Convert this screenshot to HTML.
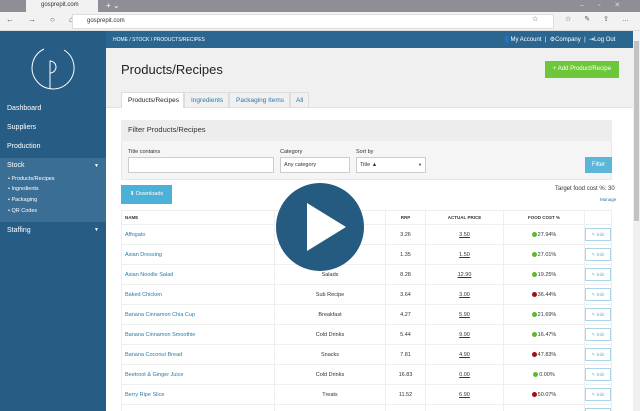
<!DOCTYPE html>
<html><head><style>
*{margin:0;padding:0;box-sizing:border-box}
html{width:640px;height:411px;overflow:hidden}
body{width:640px;height:411px;overflow:hidden;font-family:"Liberation Sans",sans-serif;background:#fff;position:relative;font-size:7px;color:#333}
.abs{position:absolute}
#tabbar{left:0;top:0;width:640px;height:12px;background:#8f8d96}
#tab{left:26px;top:0;width:72px;height:12px;background:#f2f2f2;font-size:6px;padding:2px 0 0 15px;color:#333}
#addr{left:0;top:12px;width:640px;height:19px;background:#f2f2f2;border-bottom:1px solid #ddd}
#url{left:72px;top:14px;width:482px;height:15px;background:#fff;border:1px solid #ddd;font-size:6px;padding:3px 0 0 14px;color:#333}
#side{left:0;top:31px;width:106px;height:380px;background:#275d85}
.nav{position:absolute;left:7px;color:#fff;font-size:7px}
.sub{position:absolute;left:8px;color:#fff;font-size:5.5px}
#top{left:106px;top:31px;width:527px;height:17px;background:#2b6690;color:#fff;font-size:5px}
#scroll{left:633px;top:31px;width:7px;height:380px;background:#f0f0f0}
#hdr{left:106px;top:48px;width:527px;height:60px;background:#f0f0f0;border-bottom:1px solid #e2e2e2}
.tab{position:absolute;top:92px;height:16px;font-size:6.5px;padding-top:4px;color:#2a7aa8;border:1px solid #ddd;border-bottom:none}
#tw{position:absolute;left:0;top:0;width:633px;height:411px;overflow:hidden}
table{position:absolute;left:121px;top:210px;width:491px;border-collapse:collapse;font-size:5.5px}
td,th{border:1px solid #eee;height:20px;text-align:center}
th{height:14px;font-size:4.5px;font-weight:bold}
td:first-child,th:first-child{text-align:left;padding-left:3px}
td:first-child{color:#2a7aa8}
.u{text-decoration:underline}
.d{display:inline-block;width:5px;height:5px;border-radius:50%;background:#5cb82e;vertical-align:-1px;margin-right:1px}
.r{background:#a01010}
.e{display:inline-block;width:26px;height:13px;border:1px solid #a8d6e8;color:#5bc0de;font-size:4.5px;line-height:11px}
</style></head><body>
<div id="tabbar" class="abs"></div>
<div id="tab" class="abs">gosprepit.com</div>
<div class="abs" style="left:106px;top:1px;color:#fff;font-size:8px">+ ⌄</div>
<div class="abs" style="left:580px;top:1px;color:#ddd;font-size:7px;letter-spacing:14px">–▫✕</div>
<div id="addr" class="abs"></div>
<div class="abs" style="left:6px;top:15px;color:#555;font-size:8px;letter-spacing:14px">←→○⌂</div>
<div id="url" class="abs">gosprepit.com</div>
<div class="abs" style="left:532px;top:15px;color:#555;font-size:7px">☆</div>
<div class="abs" style="left:565px;top:15px;color:#555;font-size:7px;letter-spacing:13px">☆✎⇪…</div>
<div id="side" class="abs">
<svg class="abs" style="left:30px;top:14px" width="46" height="46" viewBox="0 0 46 46"><path d="M14 4 A21 21 0 1 0 34 5" fill="none" stroke="#fff" stroke-width="1"/><path d="M20 44 V16 A6 6 0 0 1 26 22 A6 6 0 0 1 20 28" fill="none" stroke="#fff" stroke-width="1"/></svg>
<div class="nav" style="top:74px">Dashboard</div>
<div class="nav" style="top:93px">Suppliers</div>
<div class="nav" style="top:112px">Production</div>
<div class="abs" style="left:0;top:127px;width:106px;height:64px;background:#3a6e94"></div>
<div class="nav" style="top:131px">Stock</div><div class="nav" style="left:94px;top:132px;font-size:5px">▼</div>
<div class="sub" style="top:145px">• Products/Recipes</div>
<div class="sub" style="top:155px">• Ingredients</div>
<div class="sub" style="top:166px">• Packaging</div>
<div class="sub" style="top:177px">• QR Codes</div>
<div class="nav" style="top:196px">Staffing</div><div class="nav" style="left:94px;top:196px;font-size:5px">▼</div>
</div>
<div id="top" class="abs"><span class="abs" style="left:7px;top:6px">HOME / STOCK / PRODUCTS/RECIPES</span><span class="abs" style="left:397px;top:5px;font-size:6px">👤My Account &nbsp;|&nbsp; ⚙Company &nbsp;|&nbsp; ⇥Log Out</span></div>
<div id="scroll" class="abs"><div class="abs" style="left:1px;top:10px;width:5px;height:180px;background:#c2c2c2"></div></div>
<div id="hdr" class="abs"></div>
<div class="abs" style="left:121px;top:62px;font-size:13px;color:#222">Products/Recipes</div>
<div class="abs" style="left:545px;top:61px;width:74px;height:17px;background:#6cc83a;color:#fff;font-size:6px;text-align:center;line-height:17px">+ Add Product/Recipe</div>
<div class="tab" style="left:121px;width:63px;background:#fff;color:#222;padding-left:6px">Products/Recipes</div>
<div class="tab" style="left:184px;width:45px;padding-left:6px">Ingredients</div>
<div class="tab" style="left:229px;width:61px;padding-left:6px">Packaging Items</div>
<div class="tab" style="left:290px;width:19px;padding-left:5px">All</div>
<div class="abs" style="left:121px;top:120px;width:491px;height:60px;background:#f5f5f5;border:1px solid #e8e8e8"></div>
<div class="abs" style="left:121px;top:120px;width:491px;height:21px;background:#ededed;font-size:7.5px;padding:5px 0 0 7px;color:#333">Filter Products/Recipes</div>
<div class="abs" style="left:128px;top:149px;font-size:5.5px">Title contains</div>
<div class="abs" style="left:128px;top:157px;width:146px;height:16px;background:#fff;border:1px solid #ccc"></div>
<div class="abs" style="left:280px;top:149px;font-size:5.5px">Category</div>
<div class="abs" style="left:280px;top:157px;width:70px;height:16px;background:#fff;border:1px solid #ccc;font-size:5.5px;padding:4px 3px">Any category</div>
<div class="abs" style="left:356px;top:149px;font-size:5.5px">Sort by</div>
<div class="abs" style="left:356px;top:157px;width:70px;height:16px;background:#fff;border:1px solid #ccc;font-size:5.5px;padding:4px 3px">Title ▲<span style="float:right;font-size:4px">▼</span></div>
<div class="abs" style="left:585px;top:157px;width:27px;height:16px;background:#5bb6d8;color:#fff;font-size:6px;text-align:center;line-height:16px">Filter</div>
<div class="abs" style="left:121px;top:185px;width:51px;height:19px;background:#4cb1d8;color:#fff;font-size:5.5px;text-align:center;line-height:19px">⬇ Downloads</div>
<div class="abs" style="left:555px;top:186px;font-size:6px">Target food cost %: 30</div>
<div class="abs" style="left:600px;top:197px;font-size:4.5px;color:#2a7aa8">Manage</div>
<div id="tw">
<table>
<tr><th style="width:153px">NAME</th><th style="width:111px"></th><th style="width:40px">RRP</th><th style="width:78px">ACTUAL PRICE</th><th style="width:81px">FOOD COST %</th><th></th></tr>
<tr><td>Affogato</td><td></td><td>3.26</td><td class="u">3.50</td><td><i class="d"></i>27.94%</td><td><span class="e">✎ Edit</span></td></tr>
<tr><td>Asian Dressing</td><td>&nbsp;&nbsp;&nbsp;&nbsp;&nbsp;&nbsp;&nbsp;&nbsp;&nbsp;&nbsp;&nbsp;&nbsp;&nbsp;&nbsp;&nbsp;&nbsp;s</td><td>1.35</td><td class="u">1.50</td><td><i class="d"></i>27.01%</td><td><span class="e">✎ Edit</span></td></tr>
<tr><td>Asian Noodle Salad</td><td>Salads</td><td>8.28</td><td class="u">12.90</td><td><i class="d"></i>19.25%</td><td><span class="e">✎ Edit</span></td></tr>
<tr><td>Baked Chicken</td><td>Sub Recipe</td><td>3.64</td><td class="u">3.00</td><td><i class="d r"></i>36.44%</td><td><span class="e">✎ Edit</span></td></tr>
<tr><td>Banana Cinnamon Chia Cup</td><td>Breakfast</td><td>4.27</td><td class="u">5.90</td><td><i class="d"></i>21.69%</td><td><span class="e">✎ Edit</span></td></tr>
<tr><td>Banana Cinnamon Smoothie</td><td>Cold Drinks</td><td>5.44</td><td class="u">9.90</td><td><i class="d"></i>16.47%</td><td><span class="e">✎ Edit</span></td></tr>
<tr><td>Banana Coconut Bread</td><td>Snacks</td><td>7.81</td><td class="u">4.90</td><td><i class="d r"></i>47.83%</td><td><span class="e">✎ Edit</span></td></tr>
<tr><td>Beetroot &amp; Ginger Juice</td><td>Cold Drinks</td><td>16.83</td><td class="u">0.00</td><td><i class="d"></i>0.00%</td><td><span class="e">✎ Edit</span></td></tr>
<tr><td>Berry Ripe Slice</td><td>Treats</td><td>11.52</td><td class="u">6.90</td><td><i class="d r"></i>50.07%</td><td><span class="e">✎ Edit</span></td></tr>
<tr><td>&nbsp;</td><td></td><td></td><td></td><td></td><td><span class="e">✎ Edit</span></td></tr>
</table>
</div>
<svg class="abs" style="left:276px;top:183px" width="88" height="88" viewBox="0 0 88 88"><circle cx="44" cy="44" r="44" fill="#255b80"/><path d="M31 20 L70 44 L31 68 Z" fill="#fff"/></svg>
</body></html>
